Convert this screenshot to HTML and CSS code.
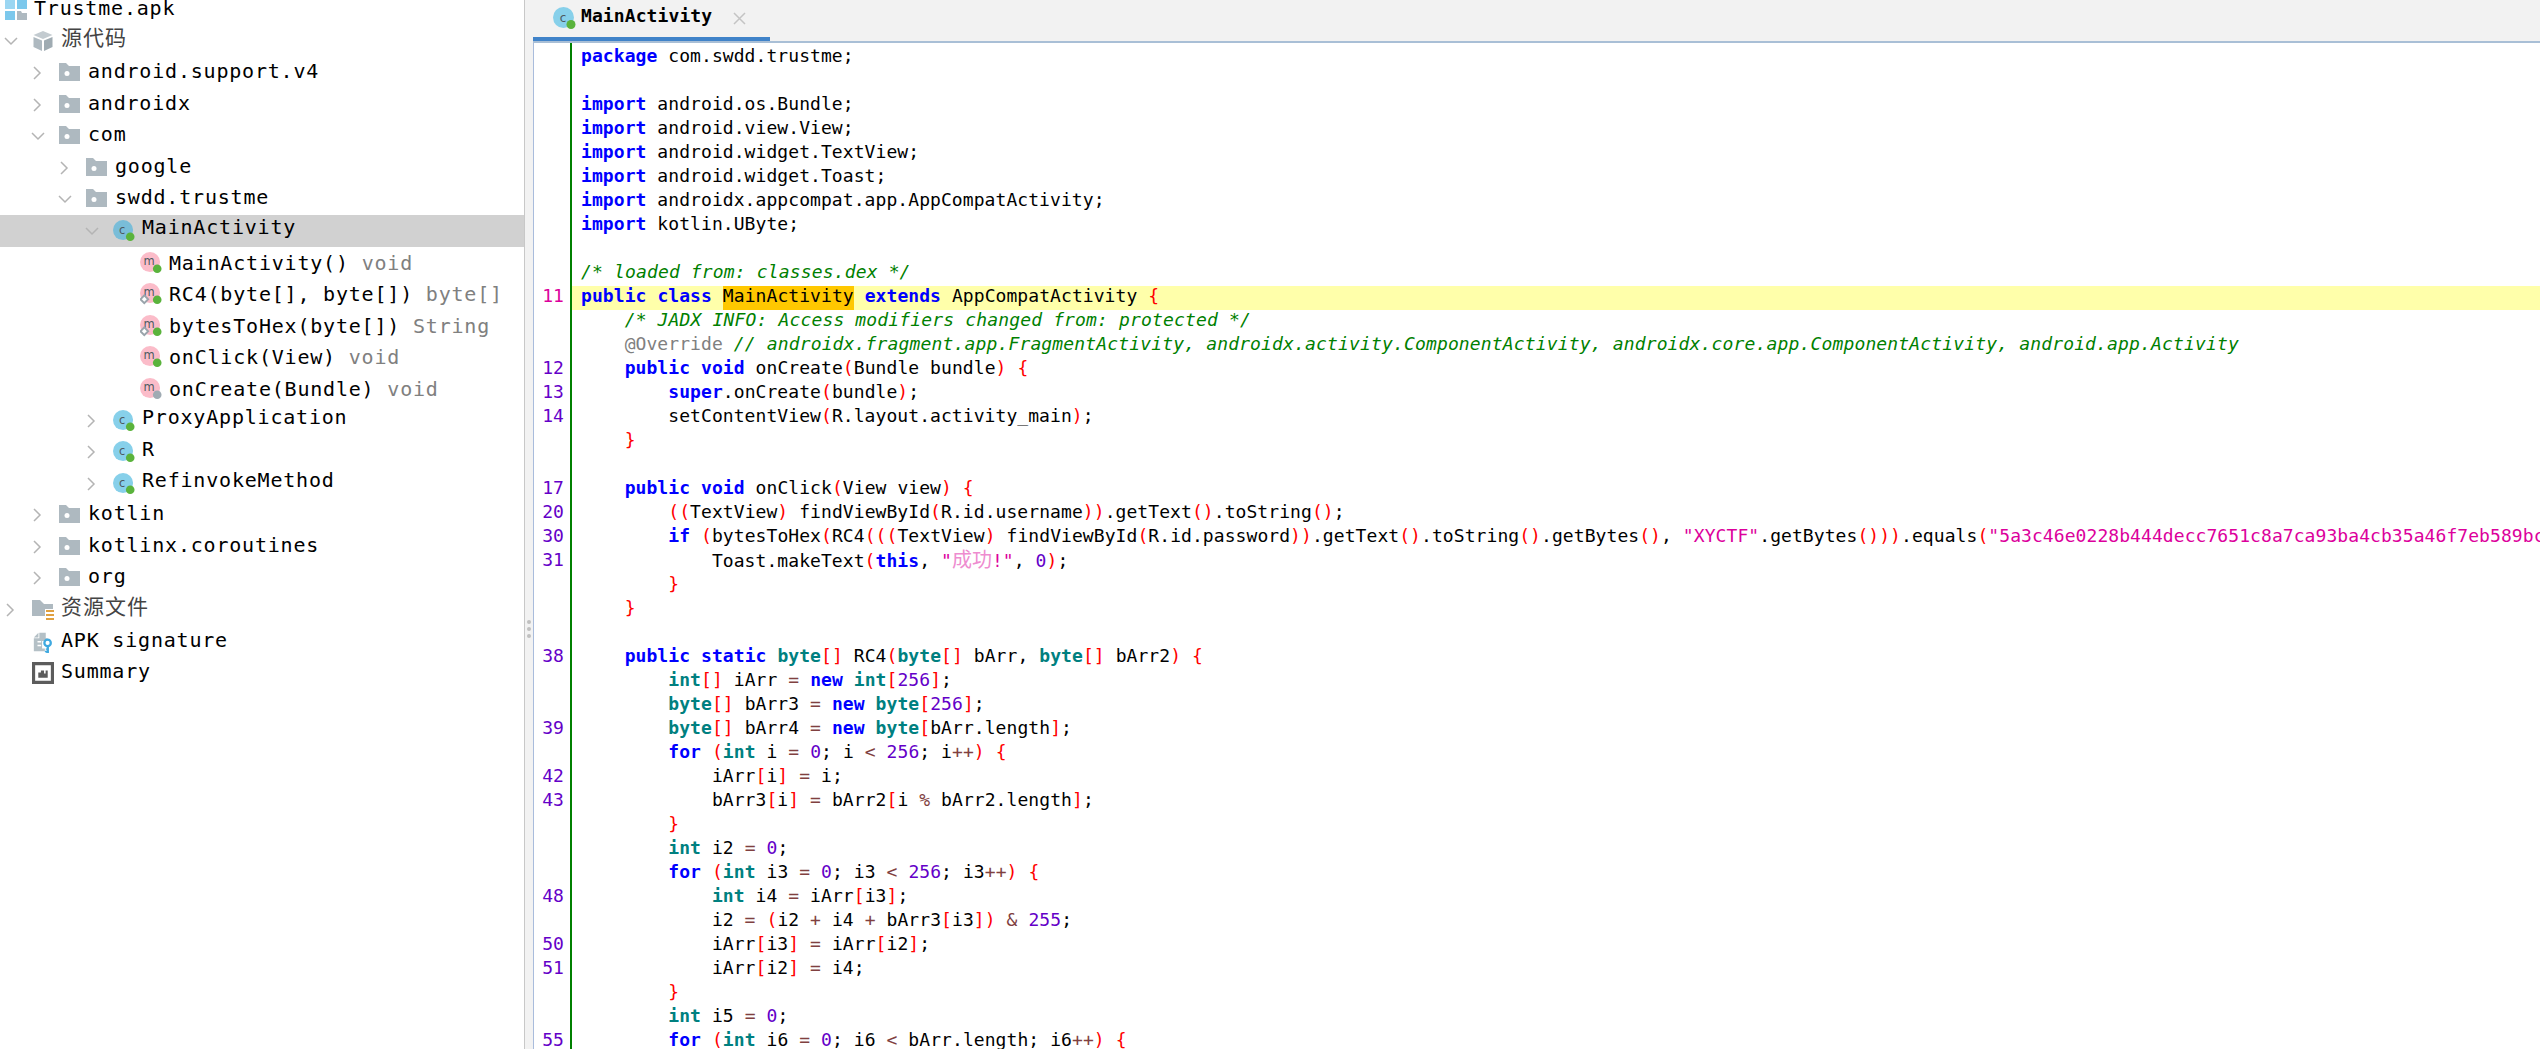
FILE: index.html
```html
<!DOCTYPE html>
<html lang="en">
<head>
  <meta charset="UTF-8" />
  <title>MainActivity - jadx</title>
  <link rel="stylesheet" href="styles.css">
</head>
<body>
  <!-- Icon sprites -->
  <svg class="sprites" width="0" height="0">
    <symbol id="chev-r" viewBox="0 0 14 14"><path d="M3 1l6 6-6 6" fill="none" stroke="#b4b4b4" stroke-width="1.5"/></symbol>
    <symbol id="chev-d" viewBox="0 0 14 14"><path d="M1 4l6 6 6-6" fill="none" stroke="#b4b4b4" stroke-width="1.5"/></symbol>
    <symbol id="apk" viewBox="0 0 22 22">
      <path d="M0 0h10v10H0z" fill="#9bd6f2"/><path d="M12 0h10v10H12z" fill="#7cc8ec"/>
      <path d="M0 12h10v9H0z" fill="#7cc8ec"/><path d="M12 12l4 0 1 2h5v7H12z" fill="#aeb9c0"/>
    </symbol>
    <symbol id="cube" viewBox="0 0 21 22">
      <path d="M10.5 1L20 5l-9.500 4L1 5z" fill="#c3cbd0"/>
      <path d="M1 7l8.500 3.500V21L1 17z" fill="#aeb9c0"/>
      <path d="M20 7l-8.500 3.500V21l8.500-4z" fill="#9fabb2"/>
    </symbol>
    <symbol id="folder" viewBox="0 0 21 18">
      <path d="M0 0h7l3 3h11v15H0z" fill="#aeb9c0"/><circle cx="8" cy="10.500" r="2.500" fill="#fff"/>
    </symbol>
    <symbol id="res" viewBox="0 0 22 22">
      <path d="M0 1h8l4 4h9v12H0z" fill="#aeb9c0"/><path d="M13 10h9v12h-9z" fill="#fff"/>
      <path d="M14 11h8v2h-8zM14 15h8v2h-8zM14 19h8v2h-8z" fill="#e0a040"/>
    </symbol>
    <symbol id="sign" viewBox="0 0 20 24">
      <path d="M0 7l5-5v5zM0 8h6V2h7v6h2v3H9v8h3v3H0z" fill="#b4c0c6"/>
      <path d="M4 11h4v1.500H4zM4 15h4v1.500H4z" fill="#fff"/>
      <circle cx="15" cy="13" r="3.500" fill="none" stroke="#3fa9e0" stroke-width="2.500"/>
      <path d="M14 16h2.500v8H14l-2-1v-1.500h2v-1h-1V19h1z" fill="#3fa9e0"/>
    </symbol>
    <symbol id="summary" viewBox="0 0 21 21">
      <path d="M0 0h21v21H0zM3 3v15h15V3z" fill="#5c5c5c"/>
      <path d="M6 15V10h2.500V8h3v3H13V8h2v7z" fill="#5c5c5c"/>
    </symbol>
    <symbol id="cls" viewBox="0 0 23 23">
      <circle cx="10.500" cy="10.500" r="10.500" fill="currentColor"/>
      <text x="10" y="15" class="ic-letter">c</text>
      <circle cx="18" cy="17.500" r="4.500" fill="#5ab33c"/>
    </symbol>
    <symbol id="m-pub" viewBox="0 0 23 23">
      <circle cx="10.500" cy="10.500" r="10.500" fill="#fbbcc9"/>
      <text x="10" y="14" class="ic-letter">m</text>
      <circle cx="18" cy="17.500" r="4.500" fill="#5ab33c"/>
    </symbol>
    <symbol id="m-prot" viewBox="0 0 23 23">
      <circle cx="10.500" cy="10.500" r="10.500" fill="#fbbcc9"/>
      <text x="10" y="14" class="ic-letter">m</text>
      <circle cx="18" cy="17.500" r="4.500" fill="#a0abb3"/>
    </symbol>
    <symbol id="m-static" viewBox="0 0 23 23">
      <circle cx="10.500" cy="10.500" r="10.500" fill="#fbbcc9"/>
      <text x="10" y="14" class="ic-letter">m</text>
      <path d="M4.500 13l4 4-4 4-4-4z" fill="#fff" stroke="#9aa4ab" stroke-width="2"/>
      <circle cx="18" cy="17.500" r="4.500" fill="#5ab33c"/>
    </symbol>
  </svg>

  <!-- Project tree -->
  <nav class="tree">
    <div class="row root"><svg class="icon"><use href="#apk"/></svg><span>Trustme.apk</span></div>
    <div class="row lv0"><svg class="chev"><use href="#chev-d"/></svg><svg class="icon"><use href="#cube"/></svg><span class="cjk">源代码</span></div>
    <div class="row lv1"><svg class="chev"><use href="#chev-r"/></svg><svg class="icon folder"><use href="#folder"/></svg><span>android.support.v4</span></div>
    <div class="row lv1"><svg class="chev"><use href="#chev-r"/></svg><svg class="icon folder"><use href="#folder"/></svg><span>androidx</span></div>
    <div class="row lv1"><svg class="chev"><use href="#chev-d"/></svg><svg class="icon folder"><use href="#folder"/></svg><span>com</span></div>
    <div class="row lv2"><svg class="chev"><use href="#chev-r"/></svg><svg class="icon folder"><use href="#folder"/></svg><span>google</span></div>
    <div class="row lv2"><svg class="chev"><use href="#chev-d"/></svg><svg class="icon folder"><use href="#folder"/></svg><span>swdd.trustme</span></div>
    <div class="row lv3 selected"><svg class="chev"><use href="#chev-d"/></svg><svg class="icon cls"><use href="#cls"/></svg><span>MainActivity</span></div>
    <div class="row lv4"><span class="chev"></span><svg class="icon"><use href="#m-pub"/></svg><span>MainActivity() <em>void</em></span></div>
    <div class="row lv4"><span class="chev"></span><svg class="icon"><use href="#m-static"/></svg><span>RC4(byte[], byte[]) <em>byte[]</em></span></div>
    <div class="row lv4"><span class="chev"></span><svg class="icon"><use href="#m-static"/></svg><span>bytesToHex(byte[]) <em>String</em></span></div>
    <div class="row lv4"><span class="chev"></span><svg class="icon"><use href="#m-pub"/></svg><span>onClick(View) <em>void</em></span></div>
    <div class="row lv4"><span class="chev"></span><svg class="icon"><use href="#m-prot"/></svg><span>onCreate(Bundle) <em>void</em></span></div>
    <div class="row lv3"><svg class="chev"><use href="#chev-r"/></svg><svg class="icon cls"><use href="#cls"/></svg><span>ProxyApplication</span></div>
    <div class="row lv3"><svg class="chev"><use href="#chev-r"/></svg><svg class="icon cls"><use href="#cls"/></svg><span>R</span></div>
    <div class="row lv3"><svg class="chev"><use href="#chev-r"/></svg><svg class="icon cls"><use href="#cls"/></svg><span>RefinvokeMethod</span></div>
    <div class="row lv1"><svg class="chev"><use href="#chev-r"/></svg><svg class="icon folder"><use href="#folder"/></svg><span>kotlin</span></div>
    <div class="row lv1"><svg class="chev"><use href="#chev-r"/></svg><svg class="icon folder"><use href="#folder"/></svg><span>kotlinx.coroutines</span></div>
    <div class="row lv1"><svg class="chev"><use href="#chev-r"/></svg><svg class="icon folder"><use href="#folder"/></svg><span>org</span></div>
    <div class="row lv0"><svg class="chev"><use href="#chev-r"/></svg><svg class="icon"><use href="#res"/></svg><span class="cjk">资源文件</span></div>
    <div class="row lv0"><span class="chev"></span><svg class="icon"><use href="#sign"/></svg><span>APK signature</span></div>
    <div class="row lv0"><span class="chev"></span><svg class="icon"><use href="#summary"/></svg><span>Summary</span></div>
  </nav>

  <!-- Splitter -->
  <div class="splitter"><i></i><i></i><i></i></div>

  <!-- Editor -->
  <main class="main">
    <div class="tabbar">
      <div class="tab">
        <svg class="tab-icon"><use href="#cls"/></svg>
        <span class="tab-title">MainActivity</span>
        <svg class="tab-close" viewBox="0 0 13 13"><path d="M1 1l11 11M12 1L1 12" stroke="#c4c4c4" stroke-width="1.500"/></svg>
      </div>
    </div>
    <div class="editor">
      <div class="gutter">
        <div></div><div></div><div></div><div></div><div></div><div></div><div></div><div></div><div></div><div></div>
        <div class="cur">11</div><div></div><div></div>
        <div>12</div><div>13</div><div>14</div><div></div><div></div>
        <div>17</div><div>20</div><div>30</div><div>31</div><div></div><div></div><div></div>
        <div>38</div><div></div><div></div><div>39</div><div></div>
        <div>42</div><div>43</div><div></div><div></div><div></div>
        <div>48</div><div></div><div>50</div><div>51</div><div></div><div></div>
        <div>55</div>
      </div>
      <div class="code">
<div class="line"><b>package</b> com.swdd.trustme;</div>
<div class="line"></div>
<div class="line"><b>import</b> android.os.Bundle;</div>
<div class="line"><b>import</b> android.view.View;</div>
<div class="line"><b>import</b> android.widget.TextView;</div>
<div class="line"><b>import</b> android.widget.Toast;</div>
<div class="line"><b>import</b> androidx.appcompat.app.AppCompatActivity;</div>
<div class="line"><b>import</b> kotlin.UByte;</div>
<div class="line"></div>
<div class="line"><i>/* loaded from: classes.dex */</i></div>
<div class="line current"><b>public</b> <b>class</b> <mark>MainActivity</mark> <b>extends</b> AppCompatActivity <u>{</u></div>
<div class="line">    <i>/* JADX INFO: Access modifiers changed from: protected */</i></div>
<div class="line">    <span class="an">@Override</span> <i>// androidx.fragment.app.FragmentActivity, androidx.activity.ComponentActivity, androidx.core.app.ComponentActivity, android.app.Activity</i></div>
<div class="line">    <b>public</b> <b>void</b> onCreate<u>(</u>Bundle bundle<u>)</u> <u>{</u></div>
<div class="line">        <b>super</b>.onCreate<u>(</u>bundle<u>)</u>;</div>
<div class="line">        setContentView<u>(</u>R.layout.activity_main<u>)</u>;</div>
<div class="line">    <u>}</u></div>
<div class="line"></div>
<div class="line">    <b>public</b> <b>void</b> onClick<u>(</u>View view<u>)</u> <u>{</u></div>
<div class="line">        <u>((</u>TextView<u>)</u> findViewById<u>(</u>R.id.username<u>))</u>.getText<u>()</u>.toString<u>()</u>;</div>
<div class="line">        <b>if</b> <u>(</u>bytesToHex<u>(</u>RC4<u>(((</u>TextView<u>)</u> findViewById<u>(</u>R.id.password<u>))</u>.getText<u>()</u>.toString<u>()</u>.getBytes<u>()</u>, <s>"XYCTF"</s>.getBytes<u>()))</u>.equals<u>(</u><s>"5a3c46e0228b444decc7651c8a7ca93ba4cb35a46f7eb589bcd"</s><u>))</u> <u>{</u></div>
<div class="line">            Toast.makeText<u>(</u><b>this</b>, <s>"<span class="zh">成功</span>!"</s>, <var>0</var><u>)</u>;</div>
<div class="line">        <u>}</u></div>
<div class="line">    <u>}</u></div>
<div class="line"></div>
<div class="line">    <b>public</b> <b>static</b> <dfn>byte</dfn><u>[]</u> RC4<u>(</u><dfn>byte</dfn><u>[]</u> bArr, <dfn>byte</dfn><u>[]</u> bArr2<u>)</u> <u>{</u></div>
<div class="line">        <dfn>int</dfn><u>[]</u> iArr <q>=</q> <b>new</b> <dfn>int</dfn><u>[</u><var>256</var><u>]</u>;</div>
<div class="line">        <dfn>byte</dfn><u>[]</u> bArr3 <q>=</q> <b>new</b> <dfn>byte</dfn><u>[</u><var>256</var><u>]</u>;</div>
<div class="line">        <dfn>byte</dfn><u>[]</u> bArr4 <q>=</q> <b>new</b> <dfn>byte</dfn><u>[</u>bArr.length<u>]</u>;</div>
<div class="line">        <b>for</b> <u>(</u><dfn>int</dfn> i <q>=</q> <var>0</var>; i <q>&lt;</q> <var>256</var>; i<q>++</q><u>)</u> <u>{</u></div>
<div class="line">            iArr<u>[</u>i<u>]</u> <q>=</q> i;</div>
<div class="line">            bArr3<u>[</u>i<u>]</u> <q>=</q> bArr2<u>[</u>i <q>%</q> bArr2.length<u>]</u>;</div>
<div class="line">        <u>}</u></div>
<div class="line">        <dfn>int</dfn> i2 <q>=</q> <var>0</var>;</div>
<div class="line">        <b>for</b> <u>(</u><dfn>int</dfn> i3 <q>=</q> <var>0</var>; i3 <q>&lt;</q> <var>256</var>; i3<q>++</q><u>)</u> <u>{</u></div>
<div class="line">            <dfn>int</dfn> i4 <q>=</q> iArr<u>[</u>i3<u>]</u>;</div>
<div class="line">            i2 <q>=</q> <u>(</u>i2 <q>+</q> i4 <q>+</q> bArr3<u>[</u>i3<u>])</u> <q>&amp;</q> <var>255</var>;</div>
<div class="line">            iArr<u>[</u>i3<u>]</u> <q>=</q> iArr<u>[</u>i2<u>]</u>;</div>
<div class="line">            iArr<u>[</u>i2<u>]</u> <q>=</q> i4;</div>
<div class="line">        <u>}</u></div>
<div class="line">        <dfn>int</dfn> i5 <q>=</q> <var>0</var>;</div>
<div class="line">        <b>for</b> <u>(</u><dfn>int</dfn> i6 <q>=</q> <var>0</var>; i6 <q>&lt;</q> bArr.length; i6<q>++</q><u>)</u> <u>{</u></div>
      </div>
    </div>
  </main>
</body>
</html>
```

FILE: styles.css
```css
html, body {
  height: 100%;
}

body {
  margin: 0;
  display: flex;
  overflow: hidden;
  background: #fff;
  color: #000;
}

.sprites {
  display: none;
}

.ic-letter {
  font-family: 'DejaVu Sans', sans-serif;
  font-size: 12px;
  fill: #4d5a60;
  text-anchor: middle;
}

/* tree */
.tree {
  width: 524px;
  flex: none;
  margin-top: -6px;
  font-family: 'DejaVu Sans Mono', monospace;
  font-size: 20px;
  letter-spacing: 0.8px;
}

.row {
  height: 31.6px;
  display: flex;
  align-items: center;
  white-space: nowrap;
}

/* labels sit a little above the icon centre, methods don't */
.row > span:last-child {
  margin-bottom: 4px;
}

.lv3 > span:last-child {
  margin-bottom: 7px;
}

.lv4 > span:last-child {
  margin-bottom: 0;
}

.row > .cjk:last-child {
  margin-bottom: 10px;
}

.row em {
  font-style: normal;
  color: #808080;
}

.root { padding-left: 5px; }
.lv0 { padding-left: 4px; }
.lv1 { padding-left: 31px; }
.lv2 { padding-left: 58px; }
.lv3 { padding-left: 85px; }
.lv4 { padding-left: 112px; }

.selected {
  background: #d1d1d1;
}

.chev {
  width: 14px;
  height: 14px;
  flex: none;
  margin-right: 14px;
}

.icon {
  width: 22px;
  height: 22px;
  flex: none;
  margin-right: 7px;
}

.icon.folder {
  width: 21px;
  height: 18px;
  margin-right: 8px;
  margin-bottom: 2px;
}

.cls {
  color: #87d0ea;
}

.selected .cls {
  color: #79bdd8;
}

.cjk {
  font-family: 'Noto Sans CJK SC', sans-serif;
  font-size: 21px;
  letter-spacing: 1px;
  color: #444;
}

/* splitter */
.splitter {
  width: 9px;
  flex: none;
  background: #f2f2f2;
  border-left: 1px solid #c8c8c8;
  display: flex;
  flex-direction: column;
  justify-content: center;
  align-items: center;
  gap: 3px;
  padding-top: 208px;
  box-sizing: border-box;
}

.splitter i {
  width: 4px;
  height: 4px;
  border-radius: 50%;
  background: #c0c0c0;
}

/* editor */
.main {
  flex: 1;
  min-width: 0;
  display: flex;
  flex-direction: column;
}

.tabbar {
  height: 43px;
  flex: none;
  box-sizing: border-box;
  background: #f2f2f2;
  border-bottom: 2px solid #a9bfd6;
}

.tab {
  width: 237px;
  height: 41px;
  box-sizing: border-box;
  border-bottom: 4px solid #4083c9;
  display: flex;
  align-items: center;
  padding-left: 20px;
}

.tab-icon {
  width: 23px;
  height: 23px;
  margin-right: 5px;
  color: #87d0ea;
}

.tab-title {
  font-family: 'DejaVu Sans Mono', monospace;
  font-size: 18px;
  font-weight: bold;
  letter-spacing: 0.1px;
  margin-top: -6px;
}

.tab-close {
  width: 13px;
  height: 13px;
  margin-left: 21px;
}

.editor {
  flex: 1;
  min-height: 0;
  display: flex;
  overflow: hidden;
  border-left: 1px solid #a9bcdc;
  padding-top: 3px;
  font-family: 'DejaVu Sans Mono', 'Noto Sans CJK SC', monospace;
  font-size: 18px;
  letter-spacing: 0.07px;
  line-height: 20px;
}

.gutter {
  width: 36px;
  flex: none;
  box-sizing: border-box;
  padding-right: 6px;
  text-align: right;
  color: #6400c8;
}

.gutter div {
  height: 24px;
}

.gutter .cur {
  color: #dc009c;
}

.code {
  flex: 1;
  min-width: 0;
  border-left: 2px solid #008000;
  margin-top: -3px;
  padding-top: 3px;
  overflow: hidden;
}

.line {
  height: 24px;
  padding-left: 9px;
  white-space: pre;
}

.line.current {
  background: #ffffaa;
}

.line mark {
  display: inline-block;
  height: 24px;
  background: #ffc800;
  color: inherit;
}

/* syntax colours */
.line b { color: #0000ff; font-weight: bold; }
.line i { color: #008000; font-style: italic; letter-spacing: 0.15px; }
.line u { color: #ff0000; text-decoration: none; }
.line s { color: #dc009c; text-decoration: none; }
.line q { color: #804040; quotes: none; }
.line var { color: #6400c8; font-style: normal; }
.line dfn { color: #008080; font-style: normal; font-weight: bold; }
.line .an { color: #808080; }
.line .zh {
  font-size: 20px;
  line-height: 1;
  letter-spacing: 0;
  color: #ee8ccf;
}
```
